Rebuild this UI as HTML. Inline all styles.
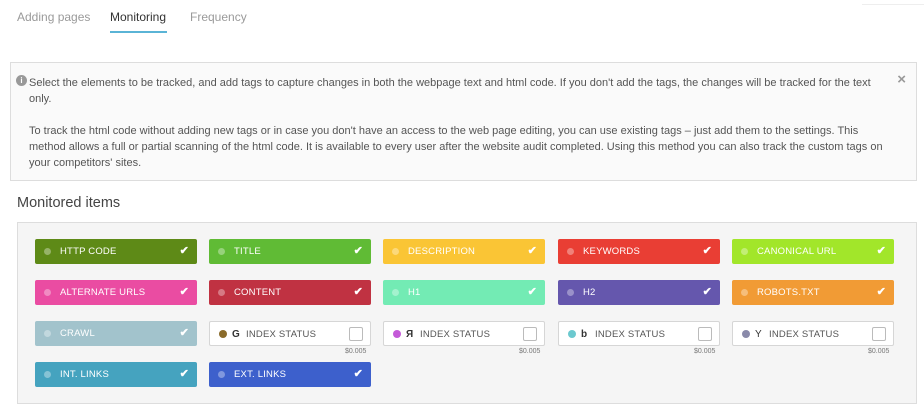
<!DOCTYPE html>
<html><head><style>
body{margin:0;width:924px;height:412px;background:#fff;font-family:"Liberation Sans",sans-serif;position:relative;overflow:hidden}
.tab{position:absolute;top:10px;font-size:12px;color:#9a9a9a}
.info{position:absolute;left:10px;top:62px;width:907px;height:119px;border:1px solid #ddd;background:#fafafa;box-sizing:border-box}
.info p{position:absolute;left:18px;margin:0;font-size:11px;line-height:16px;color:#555;width:860px}
.h{position:absolute;left:17px;top:195px;font-size:14.5px;color:#444}
.panel{position:absolute;left:17px;top:222px;width:900px;height:182px;background:#f5f5f5;border:1px solid #ddd;box-sizing:border-box}
.b{position:absolute;width:162px;height:25px;border-radius:2px;color:#fff;font-size:9.5px;letter-spacing:.2px;box-sizing:border-box;line-height:25px;padding-left:25px}
.b:before{content:"";position:absolute;left:9px;top:9px;width:7px;height:7px;border-radius:50%;background:rgba(255,255,255,.35)}
.b .c{position:absolute;right:8px;top:0;font-size:11px;font-weight:bold}
.w{background:#fff;border:1px solid #d6d6d6;color:#555;padding-left:36px}
.w .d{position:absolute;left:9px;top:8px;width:8px;height:8px;border-radius:50%}
.w .g{position:absolute;left:22px;top:0;font-weight:bold;font-size:10px;color:#333}
.w .k{position:absolute;right:7px;top:5px;width:12px;height:12px;border:1px solid #bbb;border-radius:2px}
.p{position:absolute;font-size:7px;color:#777}
</style></head><body>
<div class="tab" style="left:17px">Adding pages</div>
<div class="tab" style="left:110px;color:#333">Monitoring</div>
<div style="position:absolute;left:110px;top:31px;width:57px;height:2px;background:#5ab4d6"></div>
<div class="tab" style="left:190px">Frequency</div>
<div style="position:absolute;left:862px;top:0;width:62px;height:4px;border-bottom:1px solid #eee"></div>
<div class="info">
<div style="position:absolute;left:5px;top:12px;width:11px;height:11px;border-radius:50%;background:#999;color:#fff;font-size:8px;text-align:center;line-height:11px;font-weight:bold">i</div>
<p style="top:12px">Select the elements to be tracked, and add tags to capture changes in both the webpage text and html code. If you don't add the tags, the changes will be tracked for the text only.</p>
<p style="top:60px">To track the html code without adding new tags or in case you don't have an access to the web page editing, you can use existing tags – just add them to the settings. This method allows a full or partial scanning of the html code. It is available to every user after the website audit completed. Using this method you can also track the custom tags on your competitors' sites.</p>
<div style="position:absolute;right:10px;top:8px;font-size:15px;color:#999;font-weight:bold">×</div>
</div>
<div class="h">Monitored items</div>
<div class="panel"></div>
<div class="b" style="left:35px;top:239px;background:#5e8a17">HTTP CODE<span class="c">✔</span></div>
<div class="b" style="left:209px;top:239px;background:#60bb35">TITLE<span class="c">✔</span></div>
<div class="b" style="left:383px;top:239px;background:#fac535">DESCRIPTION<span class="c">✔</span></div>
<div class="b" style="left:558px;top:239px;background:#e93e34">KEYWORDS<span class="c">✔</span></div>
<div class="b" style="left:732px;top:239px;background:#a2e62a">CANONICAL URL<span class="c">✔</span></div>
<div class="b" style="left:35px;top:280px;background:#ea4ca2">ALTERNATE URLS<span class="c">✔</span></div>
<div class="b" style="left:209px;top:280px;background:#c03242">CONTENT<span class="c">✔</span></div>
<div class="b" style="left:383px;top:280px;background:#73ebb4">H1<span class="c">✔</span></div>
<div class="b" style="left:558px;top:280px;background:#6557ad">H2<span class="c">✔</span></div>
<div class="b" style="left:732px;top:280px;background:#f19b35">ROBOTS.TXT<span class="c">✔</span></div>
<div class="b" style="left:35px;top:321px;background:#a2c3cc">CRAWL<span class="c">✔</span></div>
<div class="b w" style="left:209px;top:321px"><span class="d" style="background:#8a6b2a"></span><span class="g">G</span>INDEX STATUS<span class="k"></span></div>
<div class="b w" style="left:383px;top:321px"><span class="d" style="background:#c45ad8"></span><span class="g">Я</span>INDEX STATUS<span class="k"></span></div>
<div class="b w" style="left:558px;top:321px"><span class="d" style="background:#6cc9cf"></span><span class="g">b</span>INDEX STATUS<span class="k"></span></div>
<div class="b w" style="left:732px;top:321px"><span class="d" style="background:#8a8aaa"></span><span class="g" style="font-weight:normal">Y</span>INDEX STATUS<span class="k"></span></div>
<div class="p" style="left:345px;top:348px">$0.005</div>
<div class="p" style="left:519px;top:348px">$0.005</div>
<div class="p" style="left:694px;top:348px">$0.005</div>
<div class="p" style="left:868px;top:348px">$0.005</div>
<div class="b" style="left:35px;top:362px;background:#45a3bf">INT. LINKS<span class="c">✔</span></div>
<div class="b" style="left:209px;top:362px;background:#3d60cc">EXT. LINKS<span class="c">✔</span></div>
</body></html>
